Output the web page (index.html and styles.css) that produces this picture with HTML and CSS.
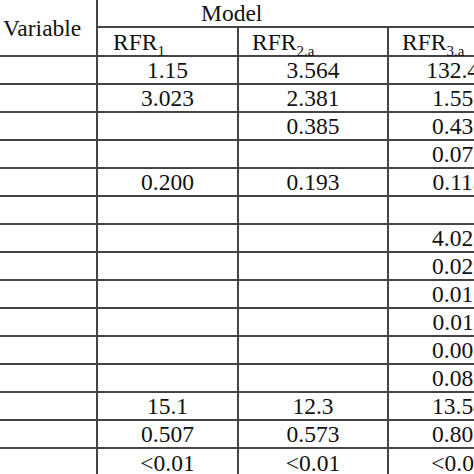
FILE: index.html
```html
<!DOCTYPE html>
<html lang="en">
<head>
    <meta charset="UTF-8">
    <title>Model results</title>
    <link rel="stylesheet" href="styles.css">
</head>
<body>
    <div class="page">
        <table class="results">
            <colgroup>
                <col class="col-var">
                <col class="col-m1">
                <col class="col-m2">
                <col class="col-m3">
            </colgroup>
            <thead>
                <tr class="head-top">
                    <th rowspan="2" class="var-head">Variable</th>
                    <th colspan="3" class="model-head">Model</th>
                </tr>
                <tr class="head-sub">
                    <th class="rfr rfr-1">RFR<sub>1</sub></th>
                    <th class="rfr">RFR<sub>2.a</sub></th>
                    <th class="rfr">RFR<sub>3.a</sub></th>
                </tr>
            </thead>
            <tbody>
                <tr><td></td><td>1.15</td><td>3.564</td><td>132.45</td></tr>
                <tr><td></td><td>3.023</td><td>2.381</td><td>1.553</td></tr>
                <tr><td></td><td></td><td>0.385</td><td>0.433</td></tr>
                <tr><td></td><td></td><td></td><td>0.077</td></tr>
                <tr><td></td><td>0.200</td><td>0.193</td><td>0.113</td></tr>
                <tr><td></td><td></td><td></td><td></td></tr>
                <tr><td></td><td></td><td></td><td>4.023</td></tr>
                <tr><td></td><td></td><td></td><td>0.029</td></tr>
                <tr><td></td><td></td><td></td><td>0.016</td></tr>
                <tr><td></td><td></td><td></td><td>0.011</td></tr>
                <tr><td></td><td></td><td></td><td>0.001</td></tr>
                <tr><td></td><td></td><td></td><td>0.081</td></tr>
                <tr><td></td><td>15.1</td><td>12.3</td><td>13.54</td></tr>
                <tr><td></td><td>0.507</td><td>0.573</td><td>0.801</td></tr>
                <tr><td></td><td>&lt;0.01</td><td>&lt;0.01</td><td>&lt;0.01</td></tr>
            </tbody>
        </table>
    </div>
</body>
</html>
```

FILE: styles.css
```css
body {
    margin: 0;
    padding: 0;
    background-color: #fff;
    overflow: hidden;
}
.page {
    width: 474px;
    height: 474px;
    overflow: hidden;
}
.results {
    border-collapse: collapse;
    border-style: hidden;
    table-layout: fixed;
    width: 528px;
    font-family: "Liberation Serif", "Times New Roman", serif;
    font-size: 23.5px;
    color: #111;
}
.col-var { width: 97px; }
.col-m1 { width: 141px; }
.col-m2 { width: 150px; }
.col-m3 { width: 140px; }
.results th,
.results td {
    border: 2px solid #444;
    padding: 0;
    font-weight: normal;
    line-height: 24px;
    white-space: nowrap;
}
.results td {
    text-align: center;
}
.results tbody tr {
    height: 28px;
}
.results .head-top {
    height: 27px;
}
.results .head-sub {
    height: 29px;
}
.results .var-head {
    text-align: left;
    padding-left: 3px;
}
.results .model-head {
    text-align: left;
    padding-left: 103px;
}
.results .rfr {
    text-align: left;
    padding-left: 13px;
}
.results .rfr-1 {
    padding-left: 15px;
}
.rfr sub {
    font-size: 15px;
    line-height: 0;
}
```
